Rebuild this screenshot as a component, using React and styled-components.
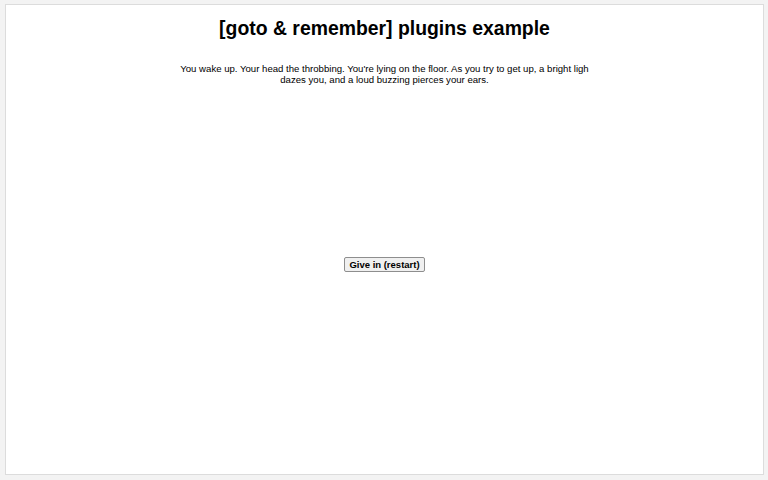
import React from 'react';
import styled, {createGlobalStyle} from 'styled-components';

const Global = createGlobalStyle`
  html, body {
    margin: 0;
    padding: 0;
    background: #f3f3f3;
  }
  body {
    font-family: "Liberation Sans", Arial, sans-serif;
    color: #000;
  }
`;

const Page = styled.div`
  box-sizing: border-box;
  margin: 4px 4px 0 5px;
  height: 471px;
  background: #fff;
  border: 1px solid #dcdcdc;
  display: flex;
  flex-direction: column;
  align-items: center;
`;

const Title = styled.h1`
  margin: 11px 0 0;
  font-size: 19.4px;
  line-height: 24px;
  font-weight: bold;
`;

const Story = styled.div`
  display: flex;
  flex-direction: column;
  align-items: center;
  margin-top: 23px;
`;

const Passage = styled.p`
  margin: 0;
  width: 420px;
  font-size: 9.6px;
  line-height: 11px;
  text-align: center;
`;

const Choices = styled.div`
  margin-top: 172px;
  display: flex;
  justify-content: center;
`;

const Choice = styled.button`
  font-family: "Liberation Sans", Arial, sans-serif;
  font-size: 9.5px;
  font-weight: bold;
  line-height: 11px;
  padding: 1px 4px;
  background: #f0f0f0;
  border: 1px solid #8e8e8e;
  border-radius: 2px;
  color: #000;
  cursor: pointer;
`;

export default function App() {
  return (
    <>
      <Global />
      <Page>
        <Title>[goto &amp; remember] plugins example</Title>
        <Story>
          <Passage>
            You wake up. Your head the throbbing. You're lying on the floor. As you try to get up, a bright ligh
            dazes you, and a loud buzzing pierces your ears.
          </Passage>
          <Choices>
            <Choice>Give in (restart)</Choice>
          </Choices>
        </Story>
      </Page>
    </>
  );
}
